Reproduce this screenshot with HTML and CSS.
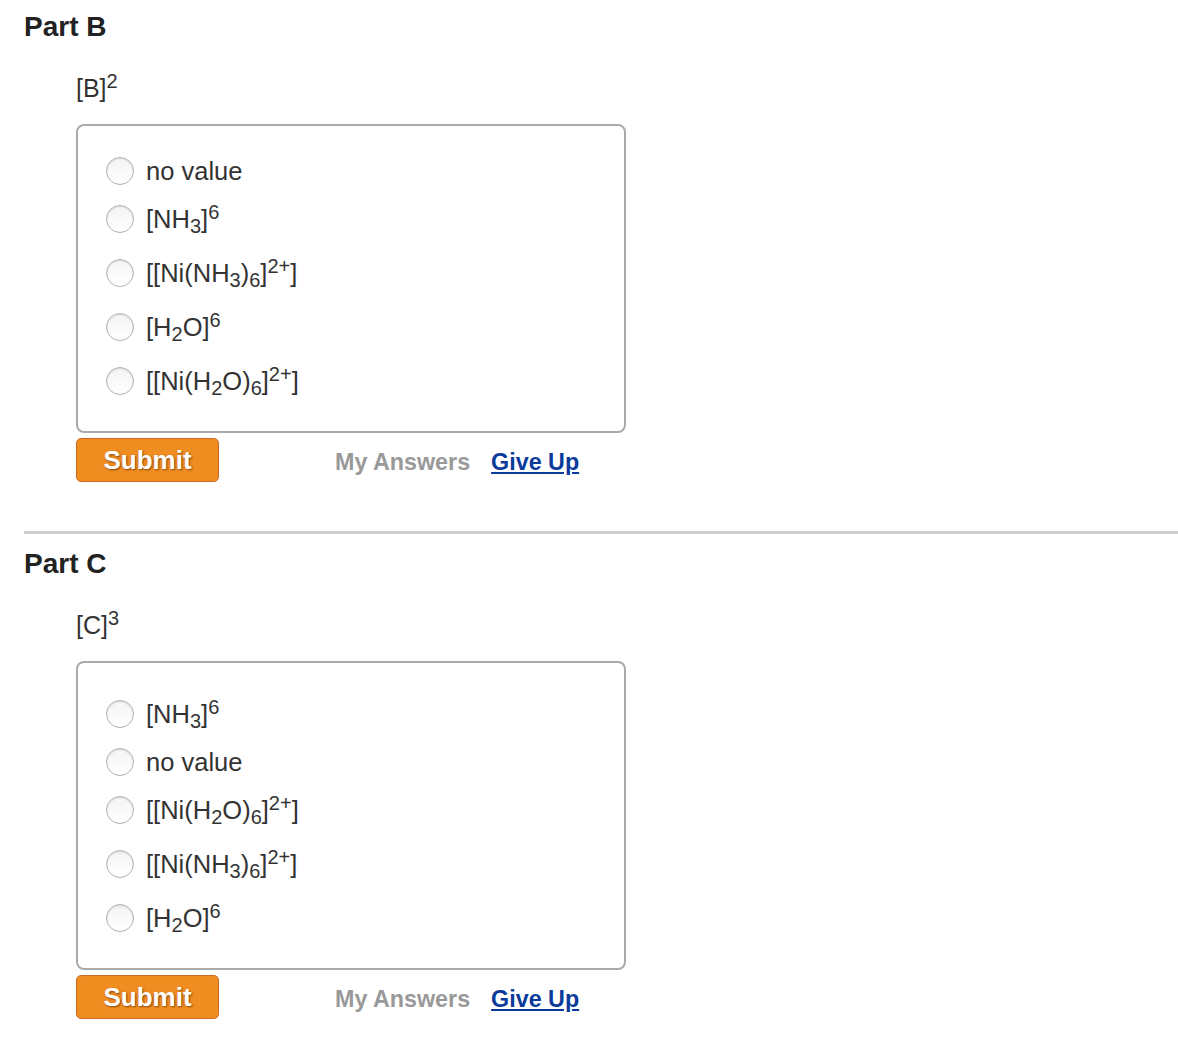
FILE: index.html
```html
<html lang="en">
<head>
    <meta charset="UTF-8">
    <title>Part B / Part C</title>
    <link rel="stylesheet" href="styles.css">
</head>
<body>
    <div class="part">
        <h2 class="part_title">Part B</h2>
        <p class="prompt">[B]<sup>2</sup></p>
        <form class="choices">
            <label class="choice"><input type="radio" name="b"><span class="txt">no value</span></label>
            <label class="choice"><input type="radio" name="b"><span class="txt">[NH<sub>3</sub>]<sup>6</sup></span></label>
            <label class="choice gap"><input type="radio" name="b"><span class="txt">[[Ni(NH<sub>3</sub>)<sub>6</sub>]<sup>2+</sup>]</span></label>
            <label class="choice gap"><input type="radio" name="b"><span class="txt">[H<sub>2</sub>O]<sup>6</sup></span></label>
            <label class="choice gap"><input type="radio" name="b"><span class="txt">[[Ni(H<sub>2</sub>O)<sub>6</sub>]<sup>2+</sup>]</span></label>
        </form>
        <div class="actions">
            <button type="button" class="submit">Submit</button>
            <span class="my_answers">My Answers</span>
            <a href="#" class="give_up">Give Up</a>
        </div>
    </div>

    <hr class="divider">

    <div class="part">
        <h2 class="part_title">Part C</h2>
        <p class="prompt">[C]<sup>3</sup></p>
        <form class="choices">
            <label class="choice gap"><input type="radio" name="c"><span class="txt">[NH<sub>3</sub>]<sup>6</sup></span></label>
            <label class="choice"><input type="radio" name="c"><span class="txt">no value</span></label>
            <label class="choice"><input type="radio" name="c"><span class="txt">[[Ni(H<sub>2</sub>O)<sub>6</sub>]<sup>2+</sup>]</span></label>
            <label class="choice gap"><input type="radio" name="c"><span class="txt">[[Ni(NH<sub>3</sub>)<sub>6</sub>]<sup>2+</sup>]</span></label>
            <label class="choice gap"><input type="radio" name="c"><span class="txt">[H<sub>2</sub>O]<sup>6</sup></span></label>
        </form>
        <div class="actions">
            <button type="button" class="submit">Submit</button>
            <span class="my_answers">My Answers</span>
            <a href="#" class="give_up">Give Up</a>
        </div>
    </div>
</body>
</html>
```
FILE: styles.css
```css
body{
    margin: 0;
    font-family: "Liberation Sans", Arial, Helvetica, sans-serif;
    color: #333;
    background: #fff;
}
.part{
    padding: 10px 0 0 24px;
}
.part_title{
    margin: 0;
    font-size: 28px;
    line-height: 34px;
    font-weight: bold;
    color: #222;
}
.prompt{
    margin: 29px 0 0 52px;
    font-size: 25px;
    line-height: 30px;
}
sup, sub{
    font-size: 20px;
    line-height: 0;
}
sup{
    vertical-align: 9px;
}
sub{
    vertical-align: -5px;
}

.choices{
    box-sizing: border-box;
    width: 550px;
    height: 309px;
    margin: 21px 0 0 52px;
    padding: 21px 0 0 28px;
    border: 2px solid #aaa;
    border-radius: 8px;
}
.choice{
    display: flex;
    align-items: center;
    height: 48px;
    font-size: 25.5px;
    cursor: pointer;
}
.choice.gap{
    margin-top: 6px;
}
.choice input{
    appearance: none;
    -webkit-appearance: none;
    box-sizing: border-box;
    width: 28px;
    height: 28px;
    margin: 0 12px 0 0;
    border: 1px solid #b3b3b3;
    border-radius: 50%;
    background: linear-gradient(#f4f4f4, #fff);
    box-shadow: inset 0 1px 2px rgba(0,0,0,0.12);
}
.choice input:checked{
    background: radial-gradient(circle, #444 0 5px, #fff 6px);
}
.txt{
    line-height: 30px;
    white-space: nowrap;
}

.actions{
    display: flex;
    align-items: center;
    margin: 5px 0 0 52px;
}
.submit{
    width: 143px;
    height: 44px;
    padding: 0;
    border: 1px solid #cd6b26;
    border-radius: 5px;
    background: #ef8d21;
    color: #fff;
    font-family: "Liberation Sans", Arial, sans-serif;
    font-size: 26px;
    font-weight: bold;
    text-shadow: 1px 1px 2px rgba(90,40,0,0.7);
    cursor: pointer;
}
.my_answers, .give_up{
    padding-top: 4px;
    font-size: 23.3px;
    font-weight: bold;
}
.my_answers{
    margin-left: 116px;
    color: #999;
}
.give_up{
    margin-left: 21px;
    color: #0a3b9b;
    text-decoration: underline;
}

.divider{
    height: 3px;
    margin: 49px 0 3px 24px;
    border: none;
    background: #ccc;
}
```
